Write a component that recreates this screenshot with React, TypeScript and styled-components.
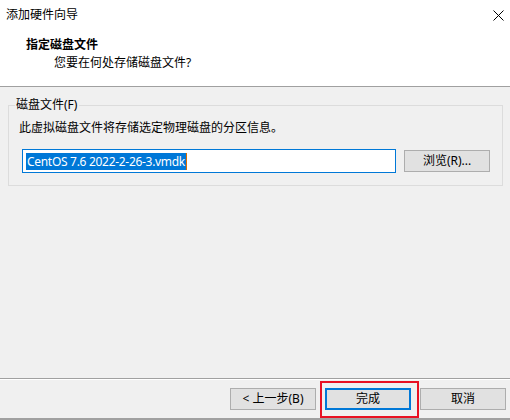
import React from "react";
import styled, { createGlobalStyle } from "styled-components";

const GlobalStyle = createGlobalStyle`
  html, body {
    margin: 0;
    padding: 0;
    background: #f0f0f0;
  }
  * {
    box-sizing: border-box;
  }
`;

// Latin glyphs from Noto Sans, Chinese from the CJK face
const uiFont = `"Noto Sans", "Noto Sans CJK SC", sans-serif`;

const Window = styled.div`
  width: 510px;
  height: 420px;
  display: flex;
  flex-direction: column;
  background: #f0f0f0;
  font-family: ${uiFont};
  font-size: 12px;
  line-height: 16px;
  color: #000;
  overflow: hidden;
`;

const Header = styled.div`
  height: 87px;
  background: #fff;
  border-bottom: 1px solid #a0a0a0;
  display: flex;
  flex-direction: column;
`;

const TitleBar = styled.div`
  display: flex;
  align-items: center;
  justify-content: space-between;
  padding: 7px 6px 0 6px;
  height: 23px;
`;

const CloseButton = styled.div`
  width: 12px;
  height: 12px;
  display: flex;
  align-items: center;
  justify-content: center;
`;

const HeadingBlock = styled.div`
  padding: 14px 0 0 26px;
  display: flex;
  flex-direction: column;
  gap: 2px;
`;

const Heading = styled.div`
  font-weight: bold;
`;

const SubHeading = styled.div`
  padding-left: 28px;
`;

const Body = styled.div`
  flex: 1;
  padding: 10px 7px 0 8px;
`;

const GroupBox = styled.fieldset`
  margin: 0;
  padding: 0 12px 12px 10px;
  border: 1px solid #dcdcdc;
  min-width: 0;
`;

const GroupLabel = styled.legend`
  padding: 0 2px 0 1px;
  margin-left: -4px;
  line-height: 16px;
`;

const Description = styled.div`
  margin-top: 7px;
`;

const PathRow = styled.div`
  margin-top: 13px;
  margin-left: 3px;
  display: flex;
  align-items: center;
  gap: 8px;
`;

const PathInput = styled.div`
  width: 375px;
  height: 24px;
  border: 1px solid #0078d7;
  background: #fff;
  display: flex;
  align-items: center;
  padding-left: 3px;
`;

const Selection = styled.span`
  background: #0078d7;
  color: #fff;
  line-height: 17px;
  padding: 0 1px;
  letter-spacing: -0.3px;
`;

const Caret = styled.span`
  width: 1px;
  height: 17px;
  background: #d86a00;
`;

const Button = styled.button<{ $focused?: boolean }>`
  width: 86px;
  height: 22px;
  padding: 0;
  font-family: ${uiFont};
  font-size: 12px;
  line-height: 16px;
  color: #000;
  background: #e1e1e1;
  border: ${(p) => (p.$focused ? "2px solid #0078d7" : "1px solid #adadad")};
  cursor: default;
`;

const Footer = styled.div`
  border-top: 1px solid #a0a0a0;
  box-shadow: inset 0 1px 0 #fff;
  padding: 9px 4px 8px 0;
  border-bottom: 2px solid #a0a0a0;
  display: flex;
  justify-content: flex-end;
  gap: 9px;
`;

const Marked = styled.div`
  position: relative;
  display: flex;

  &::after {
    content: "";
    position: absolute;
    top: -7px;
    left: -5px;
    right: -8px;
    bottom: -8px;
    border: 2px solid #e81123;
    pointer-events: none;
  }
`;

const App: React.FC = () => {
  return (
    <>
      <GlobalStyle />
      <Window>
        <Header>
          <TitleBar>
            <span>添加硬件向导</span>
            <CloseButton>
              <svg width="11" height="11" viewBox="0 0 11 11">
                <path d="M0.5 0.5 L10.5 10.5 M10.5 0.5 L0.5 10.5" stroke="#000" strokeWidth="1" fill="none" />
              </svg>
            </CloseButton>
          </TitleBar>
          <HeadingBlock>
            <Heading>指定磁盘文件</Heading>
            <SubHeading>您要在何处存储磁盘文件?</SubHeading>
          </HeadingBlock>
        </Header>

        <Body>
          <GroupBox>
            <GroupLabel>磁盘文件(F)</GroupLabel>
            <Description>此虚拟磁盘文件将存储选定物理磁盘的分区信息。</Description>
            <PathRow>
              <PathInput>
                <Selection>CentOS 7.6 2022-2-26-3.vmdk</Selection>
                <Caret />
              </PathInput>
              <Button>浏览(R)...</Button>
            </PathRow>
          </GroupBox>
        </Body>

        <Footer>
          <Button>&lt; 上一步(B)</Button>
          <Marked>
            <Button $focused>完成</Button>
          </Marked>
          <Button>取消</Button>
        </Footer>
      </Window>
    </>
  );
};

export default App;
